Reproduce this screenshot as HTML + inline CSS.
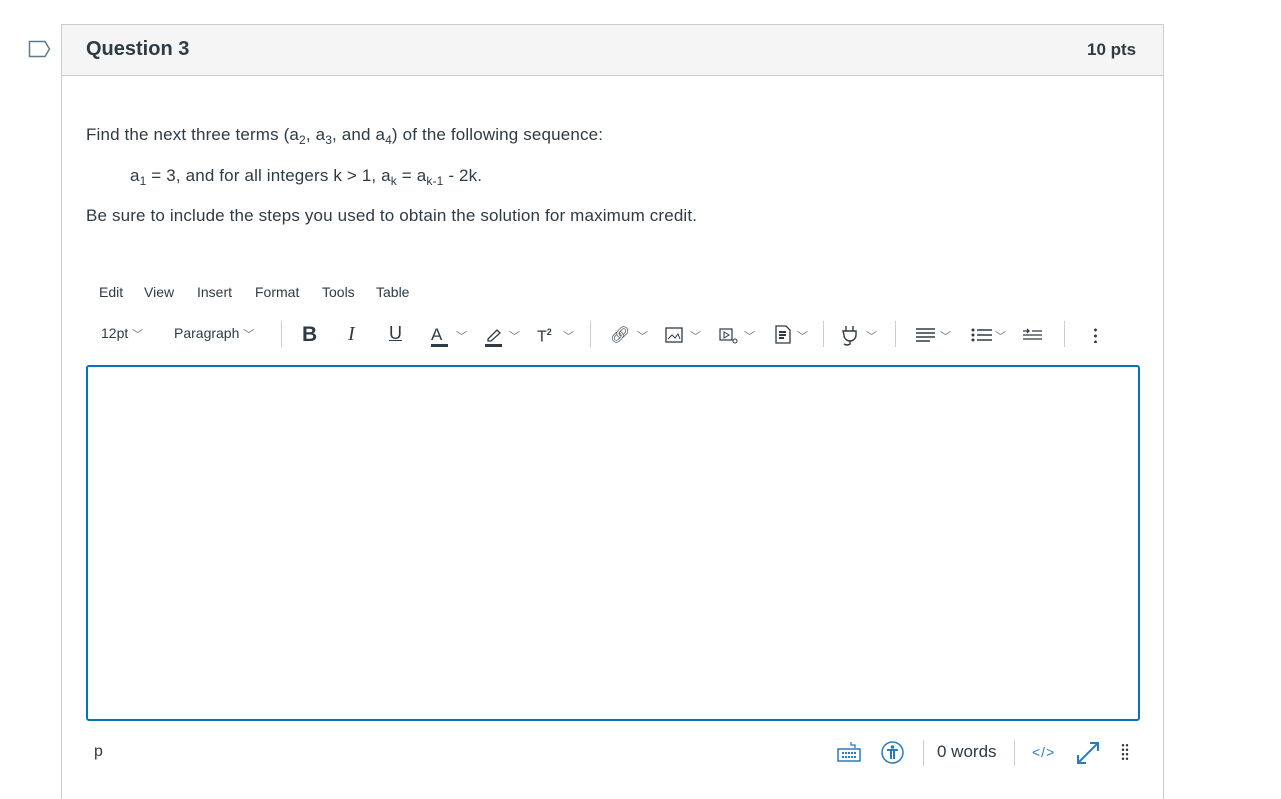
<!DOCTYPE html>
<html><head><meta charset="utf-8"><style>
*{box-sizing:border-box;margin:0;padding:0}
html,body{width:1281px;height:799px;overflow:hidden}
body{background:#fff;font-family:"Liberation Sans",sans-serif;color:#2d3b45;position:relative}
.abs{position:absolute}
.panel{left:61px;top:24px;width:1103px;height:800px;border:1px solid #c7cdd1;}
.hdr{left:62px;top:25px;width:1101px;height:51px;background:#f5f5f5;border-bottom:1px solid #c7cdd1}
.t{font-size:17px;white-space:nowrap;letter-spacing:0.15px}
sub{font-size:12px;vertical-align:-4px;line-height:0}
.menu{font-size:14px;top:284px}
.tb{top:325px;font-size:14px}
.chev{font-size:11px;color:#6b7780}
.sep{width:1px;height:26px;background:#c7cdd1;top:321px}
</style></head><body>
<svg class="abs" style="left:28px;top:40px" width="24" height="18"><path d="M1.5 1.5H17L21.5 9L17 16.5H1.5Z" fill="none" stroke="#5b7a93" stroke-width="1.5"/></svg>
<div class="abs panel"></div>
<div class="abs hdr"></div>
<div class="abs" style="left:86px;top:38px;font-size:20px;font-weight:bold;color:#2d3b45">Question 3</div>
<div class="abs" style="left:1087px;top:40px;font-size:17px;font-weight:bold;color:#2d3b45">10 pts</div>
<div class="abs t" style="left:86px;top:125px">Find the next three terms (a<sub>2</sub>, a<sub>3</sub>, and a<sub>4</sub>) of the following sequence:</div>
<div class="abs t" style="left:130px;top:166px">a<sub>1</sub> = 3, and for all integers k &gt; 1, a<sub>k</sub> = a<sub>k-1</sub> - 2k.</div>
<div class="abs t" style="left:86px;top:206px">Be sure to include the steps you used to obtain the solution for maximum credit.</div>
<div class="abs menu" style="left:99px">Edit</div>
<div class="abs menu" style="left:144px">View</div>
<div class="abs menu" style="left:197px">Insert</div>
<div class="abs menu" style="left:255px">Format</div>
<div class="abs menu" style="left:322px">Tools</div>
<div class="abs menu" style="left:376px">Table</div>
<div class="abs tb" style="left:101px">12pt <span class="chev">﹀</span></div>
<div class="abs tb" style="left:174px">Paragraph <span class="chev">﹀</span></div>
<div class="abs sep" style="left:281px"></div>
<div class="abs" style="left:302px;top:323px;font-size:21px;font-weight:bold">B</div>
<div class="abs" style="left:348px;top:323px;font-size:20px;font-style:italic;font-family:'Liberation Serif',serif">I</div>
<div class="abs" style="left:389px;top:323px;font-size:18px;text-decoration:underline">U</div>
<div class="abs" style="left:431px;top:325px;font-size:17px">A</div>
<div class="abs" style="left:431px;top:344px;width:17px;height:3px;background:#2d3b45"></div>
<div class="abs chev" style="left:456px;top:328px">﹀</div>
<svg class="abs" style="left:485px;top:328px" width="18" height="14"><path d="M3 11L12 2L15 5L6 13H3Z" fill="none" stroke="#2d3b45" stroke-width="1.3"/></svg>
<div class="abs" style="left:485px;top:344px;width:17px;height:3px;background:#2d3b45"></div>
<div class="abs chev" style="left:509px;top:328px">﹀</div>
<div class="abs" style="left:537px;top:327px;font-size:16px">T<sup style="font-size:9px;font-weight:bold">2</sup></div>
<div class="abs chev" style="left:563px;top:328px">﹀</div>
<div class="abs sep" style="left:590px"></div>
<div class="abs" style="left:610px;top:325px;font-size:16px">🔗︎</div>
<div class="abs chev" style="left:637px;top:328px">﹀</div>
<svg class="abs" style="left:665px;top:327px" width="18" height="16"><rect x="1" y="1" width="16" height="14" fill="none" stroke="#2d3b45" stroke-width="1.3"/><path d="M3 12L7 8L10 11L13 7L15 12" fill="none" stroke="#2d3b45"/></svg>
<div class="abs chev" style="left:690px;top:328px">﹀</div>
<svg class="abs" style="left:719px;top:327px" width="20" height="17"><rect x="1" y="2" width="12" height="11" fill="none" stroke="#2d3b45" stroke-width="1.2"/><path d="M5 5L10 8L5 11Z" fill="none" stroke="#2d3b45"/><circle cx="16" cy="14" r="2" fill="none" stroke="#2d3b45"/></svg>
<div class="abs chev" style="left:744px;top:328px">﹀</div>
<svg class="abs" style="left:775px;top:325px" width="16" height="19"><path d="M1 1H11L15 5V18H1Z" fill="none" stroke="#2d3b45" stroke-width="1.3"/><path d="M4 7H11M4 10H11M4 13H9" stroke="#2d3b45" stroke-width="2"/></svg>
<div class="abs chev" style="left:797px;top:328px">﹀</div>
<div class="abs sep" style="left:823px"></div>
<svg class="abs" style="left:840px;top:325px" width="20" height="22"><path d="M6 1V6M13 1V6M3 6H16V10A6 6 0 0 1 4 10ZM10 16V19Q7 21 4 19" fill="none" stroke="#2d3b45" stroke-width="1.4"/></svg>
<div class="abs chev" style="left:866px;top:328px">﹀</div>
<div class="abs sep" style="left:895px"></div>
<svg class="abs" style="left:916px;top:328px" width="20" height="14"><path d="M0 1H19M0 5H19M0 9H19M0 13H14" stroke="#2d3b45" stroke-width="1.5"/></svg>
<div class="abs chev" style="left:940px;top:328px">﹀</div>
<svg class="abs" style="left:971px;top:328px" width="22" height="14"><circle cx="2" cy="2" r="1.5" fill="#2d3b45"/><circle cx="2" cy="7" r="1.5" fill="#2d3b45"/><circle cx="2" cy="12" r="1.5" fill="#2d3b45"/><path d="M6 2H21M6 7H21M6 12H21" stroke="#2d3b45" stroke-width="1.5"/></svg>
<div class="abs chev" style="left:995px;top:328px">﹀</div>
<svg class="abs" style="left:1023px;top:328px" width="20" height="14"><path d="M0 3H6M4 1L6 3L4 5M9 3H19M0 7H19M0 11H19" stroke="#2d3b45" stroke-width="1.3" fill="none"/></svg>
<div class="abs sep" style="left:1064px"></div>
<div class="abs" style="left:1094px;top:327px;width:3px;height:16px;background:radial-gradient(circle,#2d3b45 1.3px,transparent 1.6px) 0 0/3px 6px"></div>
<div class="abs" style="left:86px;top:365px;width:1054px;height:356px;border:2px solid #0374b5;border-radius:3px"></div>
<div class="abs" style="left:94px;top:743px;font-size:16px">p</div>
<svg class="abs" style="left:837px;top:741px" width="24" height="22"><path d="M14 1V4H18V7" fill="none" stroke="#2b7abc" stroke-width="1.3"/><rect x="1" y="8" width="22" height="12" fill="none" stroke="#2b7abc" stroke-width="1.5"/><path d="M5 12H19M5 16H19" stroke="#2b7abc" stroke-width="2" stroke-dasharray="2 1"/></svg>
<svg class="abs" style="left:881px;top:741px" width="23" height="23"><circle cx="11.5" cy="11.5" r="10.5" fill="none" stroke="#2b7abc" stroke-width="1.5"/><circle cx="11.5" cy="6" r="1.8" fill="#2b7abc"/><path d="M6 9H17M10 9V18M13 9V18" stroke="#2b7abc" stroke-width="2"/></svg>
<div class="abs" style="left:923px;top:740px;width:1px;height:26px;background:#c7cdd1"></div>
<div class="abs" style="left:937px;top:742px;font-size:17px">0 words</div>
<div class="abs" style="left:1014px;top:740px;width:1px;height:26px;background:#c7cdd1"></div>
<div class="abs" style="left:1032px;top:744px;font-size:14px;color:#2b7abc;letter-spacing:1px">&lt;/&gt;</div>
<svg class="abs" style="left:1076px;top:741px" width="24" height="24"><path d="M2 22L22 2M2 14V22H10M14 2H22V10" fill="none" stroke="#2b7abc" stroke-width="2"/></svg>
<div class="abs" style="left:1121px;top:743px;width:8px;height:18px;background:radial-gradient(circle,#2d3b45 1.1px,transparent 1.4px) 0 0/4px 4.5px"></div>
</body></html>
